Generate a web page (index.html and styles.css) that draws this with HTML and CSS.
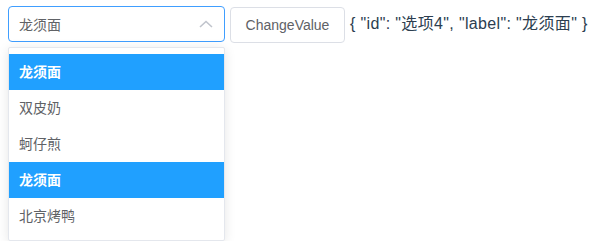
FILE: index.html
```html
<!DOCTYPE html>
<html>

<head>
    <meta charset="UTF-8">
    <title>Select</title>
    <link rel="stylesheet" href="styles.css">
</head>

<body>
    <div class="row">
        <div class="select">
            <div class="select-input">
                <span class="select-value">龙须面</span>
                <svg class="arrow" width="14" height="8" viewBox="0 0 14 8">
                    <path d="M1 7 L7 1.5 L13 7" fill="none" stroke="#c0c4cc" stroke-width="1.6" />
                </svg>
            </div>
            <ul class="dropdown">
                <li class="item selected">龙须面</li>
                <li class="item">双皮奶</li>
                <li class="item">蚵仔煎</li>
                <li class="item selected">龙须面</li>
                <li class="item">北京烤鸭</li>
            </ul>
        </div>
        <button class="btn">ChangeValue</button>
        <span class="output">{ "id": "选项4", "label": "龙须面" }</span>
    </div>
</body>

</html>
```

FILE: styles.css
```css
body {
    margin: 0;
    font-family: "Liberation Sans", Arial, "Noto Sans CJK SC", sans-serif;
    color: #303133;
}

.row {
    display: flex;
    align-items: flex-start;
    padding: 6px 0 0 8px;
}

.select {
    display: flex;
    flex-direction: column;
    gap: 5px;
    width: 217px;
}

.select-input {
    box-sizing: border-box;
    height: 36px;
    border: 1px solid #409eff;
    border-radius: 4px;
    display: flex;
    align-items: center;
    justify-content: space-between;
    padding: 0 10px 0 10px;
    font-size: 14px;
    color: #606266;
}

.arrow {
    margin-right: 1px;
}

.dropdown {
    box-sizing: border-box;
    margin: 0;
    padding: 6px 0;
    list-style: none;
    background: #fff;
    border: 1px solid #e4e7ed;
    border-radius: 2px;
    box-shadow: 0 2px 12px rgba(0, 0, 0, 0.1);
}

.item {
    height: 36px;
    line-height: 36px;
    padding: 0 10px;
    font-size: 14px;
    color: #606266;
}

.item.selected {
    background-color: #20a0ff;
    color: #fff;
    font-weight: bold;
}

.btn {
    box-sizing: border-box;
    margin: 1px 0 0 5px;
    width: 115px;
    height: 36px;
    padding: 0;
    font-family: inherit;
    font-size: 14px;
    color: #606266;
    background: #fff;
    border: 1px solid #dcdfe6;
    border-radius: 4px;
}

.output {
    margin: 8px 0 0 5px;
    font-size: 16px;
    line-height: 20px;
    letter-spacing: 0.35px;
    color: #2c3e50;
}
```
